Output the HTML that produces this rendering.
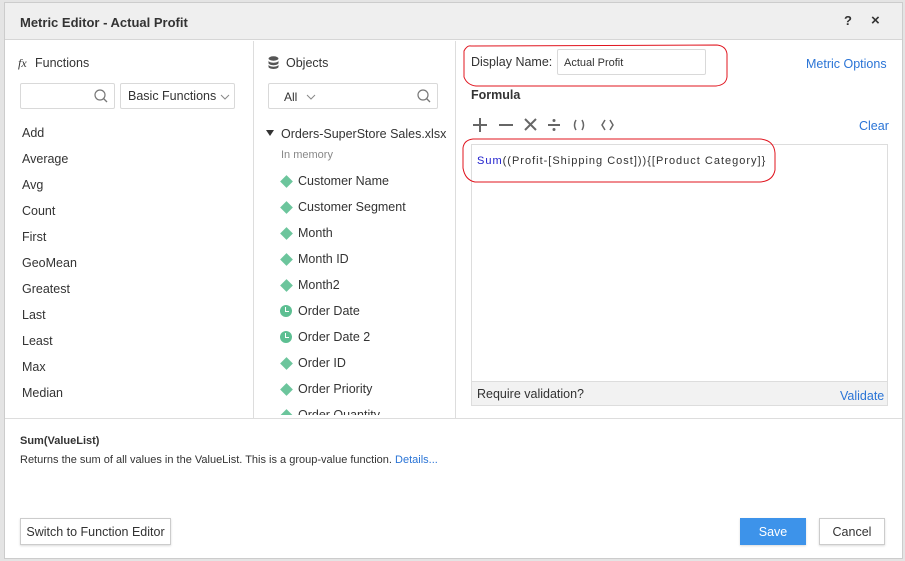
<!DOCTYPE html>
<html><head><style>
*{box-sizing:border-box;margin:0;padding:0}
body{width:905px;height:561px;background:#e4e4e4;font-family:"Liberation Sans",sans-serif;font-size:12px;color:#333;position:relative;overflow:hidden}
.dlg{position:absolute;left:4px;top:2px;width:899px;height:557px;background:#fff;border:1px solid #ccc}
.a{position:absolute}
.title{left:0;top:0;width:897px;height:37px;background:#efefef;border-bottom:1px solid #d6d6d6}
.inp{border:1px solid #d9d9d9;border-radius:2px;background:#fff}
.link{color:#2a74d6}
.item{position:absolute;font-size:12.5px;color:#333}
.dia{position:absolute;width:9px;height:9px;background:#6cc59c;transform:rotate(45deg)}
.clk{position:absolute;width:12px;height:12px;border-radius:50%;background:#5dbf92}
.clk:after{content:"";position:absolute;left:5px;top:2px;width:3px;height:4px;border-left:1.5px solid #fff;border-bottom:1.5px solid #fff}
.btn{position:absolute;border:1px solid #ccc;background:#fff;font-size:12.5px;text-align:center;line-height:26px;box-shadow:0 1px 2px rgba(0,0,0,.15)}
</style></head><body>
<div class="dlg">
<div class="a title"><div class="a" style="left:15px;top:12px;font-size:13px;font-weight:bold;color:#333">Metric Editor - Actual Profit</div>
<div class="a" style="left:839px;top:10px;font-size:13px;font-weight:bold">?</div>
<div class="a" style="left:866px;top:9px;font-size:15px;font-weight:bold">×</div></div>
<div class="a" style="left:248px;top:38px;width:1px;height:378px;background:#ddd"></div>
<div class="a" style="left:450px;top:38px;width:1px;height:378px;background:#ddd"></div>
<div class="a" style="left:0;top:415px;width:897px;height:1px;background:#ddd"></div>

<div class="a" style="left:13px;top:53px;font-style:italic;font-family:'Liberation Serif',serif;font-size:12px">fx</div>
<div class="a" style="left:30px;top:53px;font-size:12.5px">Functions</div>
<div class="a inp" style="left:15px;top:80px;width:95px;height:26px"><svg class="a" style="left:73px;top:5px" width="14" height="14"><circle cx="6" cy="6" r="5" fill="none" stroke="#777" stroke-width="1.2"/><path d="M9.5 9.5L13 13" stroke="#777" stroke-width="1.3"/></svg></div>
<div class="a inp" style="left:115px;top:80px;width:115px;height:26px"><div class="a" style="left:7px;top:5px;font-size:12.5px">Basic Functions</div><svg class="a" style="left:99px;top:9px" width="10" height="8"><path d="M1 2l4 4 4-4" fill="none" stroke="#888"/></svg></div>
<div class="item" style="left:17px;top:123px">Add</div>
<div class="item" style="left:17px;top:149px">Average</div>
<div class="item" style="left:17px;top:175px">Avg</div>
<div class="item" style="left:17px;top:201px">Count</div>
<div class="item" style="left:17px;top:227px">First</div>
<div class="item" style="left:17px;top:253px">GeoMean</div>
<div class="item" style="left:17px;top:279px">Greatest</div>
<div class="item" style="left:17px;top:305px">Last</div>
<div class="item" style="left:17px;top:331px">Least</div>
<div class="item" style="left:17px;top:357px">Max</div>
<div class="item" style="left:17px;top:383px">Median</div>

<svg class="a" style="left:263px;top:53px" width="11" height="13"><ellipse cx="5.5" cy="2.5" rx="5" ry="2.2" fill="#555"/><path d="M0.5 4.5v2.5c0 1.2 2.2 2.2 5 2.2s5-1 5-2.2V4.5c0 1.2-2.2 2.2-5 2.2s-5-1-5-2.2zM0.5 8.5v2.3c0 1.2 2.2 2.2 5 2.2s5-1 5-2.2V8.5c0 1.2-2.2 2.2-5 2.2s-5-1-5-2.2z" fill="#555"/></svg>
<div class="a" style="left:281px;top:53px;font-size:12.5px">Objects</div>
<div class="a inp" style="left:263px;top:80px;width:170px;height:26px"><div class="a" style="left:15px;top:6px;font-size:12px">All</div><svg class="a" style="left:37px;top:9px" width="10" height="8"><path d="M1 2l4 4 4-4" fill="none" stroke="#888"/></svg><svg class="a" style="left:148px;top:5px" width="14" height="14"><circle cx="6" cy="6" r="5" fill="none" stroke="#777" stroke-width="1.2"/><path d="M9.5 9.5L13 13" stroke="#777" stroke-width="1.3"/></svg></div>
<div class="a" style="left:261px;top:127px;width:0;height:0;border-left:4px solid transparent;border-right:4px solid transparent;border-top:6px solid #333"></div>
<div class="item" style="left:276px;top:124px">Orders-SuperStore Sales.xlsx</div>
<div class="a" style="left:276px;top:146px;font-size:11px;color:#888">In memory</div>
<div style="position:absolute;left:249px;top:163px;width:200px;height:249px;overflow:hidden">
<div class="dia" style="left:28px;top:11px"></div><div class="item" style="left:44px;top:8px">Customer Name</div>
<div class="dia" style="left:28px;top:37px"></div><div class="item" style="left:44px;top:34px">Customer Segment</div>
<div class="dia" style="left:28px;top:63px"></div><div class="item" style="left:44px;top:60px">Month</div>
<div class="dia" style="left:28px;top:89px"></div><div class="item" style="left:44px;top:86px">Month ID</div>
<div class="dia" style="left:28px;top:115px"></div><div class="item" style="left:44px;top:112px">Month2</div>
<div class="clk" style="left:26px;top:139px"></div><div class="item" style="left:44px;top:138px">Order Date</div>
<div class="clk" style="left:26px;top:165px"></div><div class="item" style="left:44px;top:164px">Order Date 2</div>
<div class="dia" style="left:28px;top:193px"></div><div class="item" style="left:44px;top:190px">Order ID</div>
<div class="dia" style="left:28px;top:219px"></div><div class="item" style="left:44px;top:216px">Order Priority</div>
<div class="dia" style="left:28px;top:245px"></div><div class="item" style="left:44px;top:242px">Order Quantity</div>
</div>

<div class="a" style="left:466px;top:52px;font-size:12.5px">Display Name:</div>
<div class="a inp" style="left:552px;top:46px;width:149px;height:26px"><div class="a" style="left:6px;top:7px;font-size:11px">Actual Profit</div></div>
<div class="a link" style="left:801px;top:54px;font-size:12.5px">Metric Options</div>
<div class="a" style="left:466px;top:85px;font-size:12.5px;font-weight:bold">Formula</div>
<svg class="a" style="left:466px;top:114px" width="160" height="16" fill="none" stroke="#666" stroke-width="2"><path d="M2 8h14M9 1v14"/><path d="M28 8h14"/><path d="M54 2l11 11M65 2L54 13"/><path d="M77 8h12"/><circle cx="83" cy="3.5" r="1" fill="#666" stroke-width="1"/><circle cx="83" cy="12.5" r="1" fill="#666" stroke-width="1"/><path d="M105 3q-3 5 0 10M111 3q3 5 0 10" stroke-width="1.5"/><path d="M134 3l-3 5 3 5M139 3l3 5-3 5" stroke-width="1.5"/></svg>
<div class="a link" style="left:854px;top:116px;font-size:12.5px">Clear</div>
<div class="a" style="left:466px;top:141px;width:417px;height:262px;border:1px solid #ddd">
<div class="a" style="left:5px;top:10px;font-size:11px;letter-spacing:1px;color:#333"><span style="color:#1a1acc">Sum</span>((Profit-[Shipping Cost])){[Product Category]}</div>
<div class="a" style="left:0;top:236px;width:415px;height:24px;background:#f2f2f2;border-top:1px solid #ddd"><div class="a" style="left:5px;top:5px;font-size:12.5px">Require validation?</div><div class="a link" style="left:368px;top:7px;font-size:12.5px">Validate</div></div>
</div>
<svg class="a" style="left:454px;top:40px" width="440" height="140" fill="none" stroke="#e0141e" stroke-width="1"><path d="M12 3Q8 2 5 8v26q3 8 12 9h240q10-1 11-9V11q-1-8-10-9z"/><path d="M14 96Q5 97 4 105v20q2 12 12 14h285q13-1 15-12v-17q-1-13-15-14z"/></svg>

<div class="a" style="left:15px;top:432px;font-size:11px;font-weight:bold">Sum(ValueList)</div>
<div class="a" style="left:15px;top:451px;font-size:11px">Returns the sum of all values in the ValueList. This is a group-value function. <span class="link">Details...</span></div>
<div class="btn" style="left:15px;top:515px;width:151px;height:27px">Switch to Function Editor</div>
<div class="btn" style="left:735px;top:515px;width:66px;height:27px;background:#3d93ea;border-color:#3d93ea;color:#fff">Save</div>
<div class="btn" style="left:814px;top:515px;width:66px;height:27px">Cancel</div>
</div>
</body></html>
